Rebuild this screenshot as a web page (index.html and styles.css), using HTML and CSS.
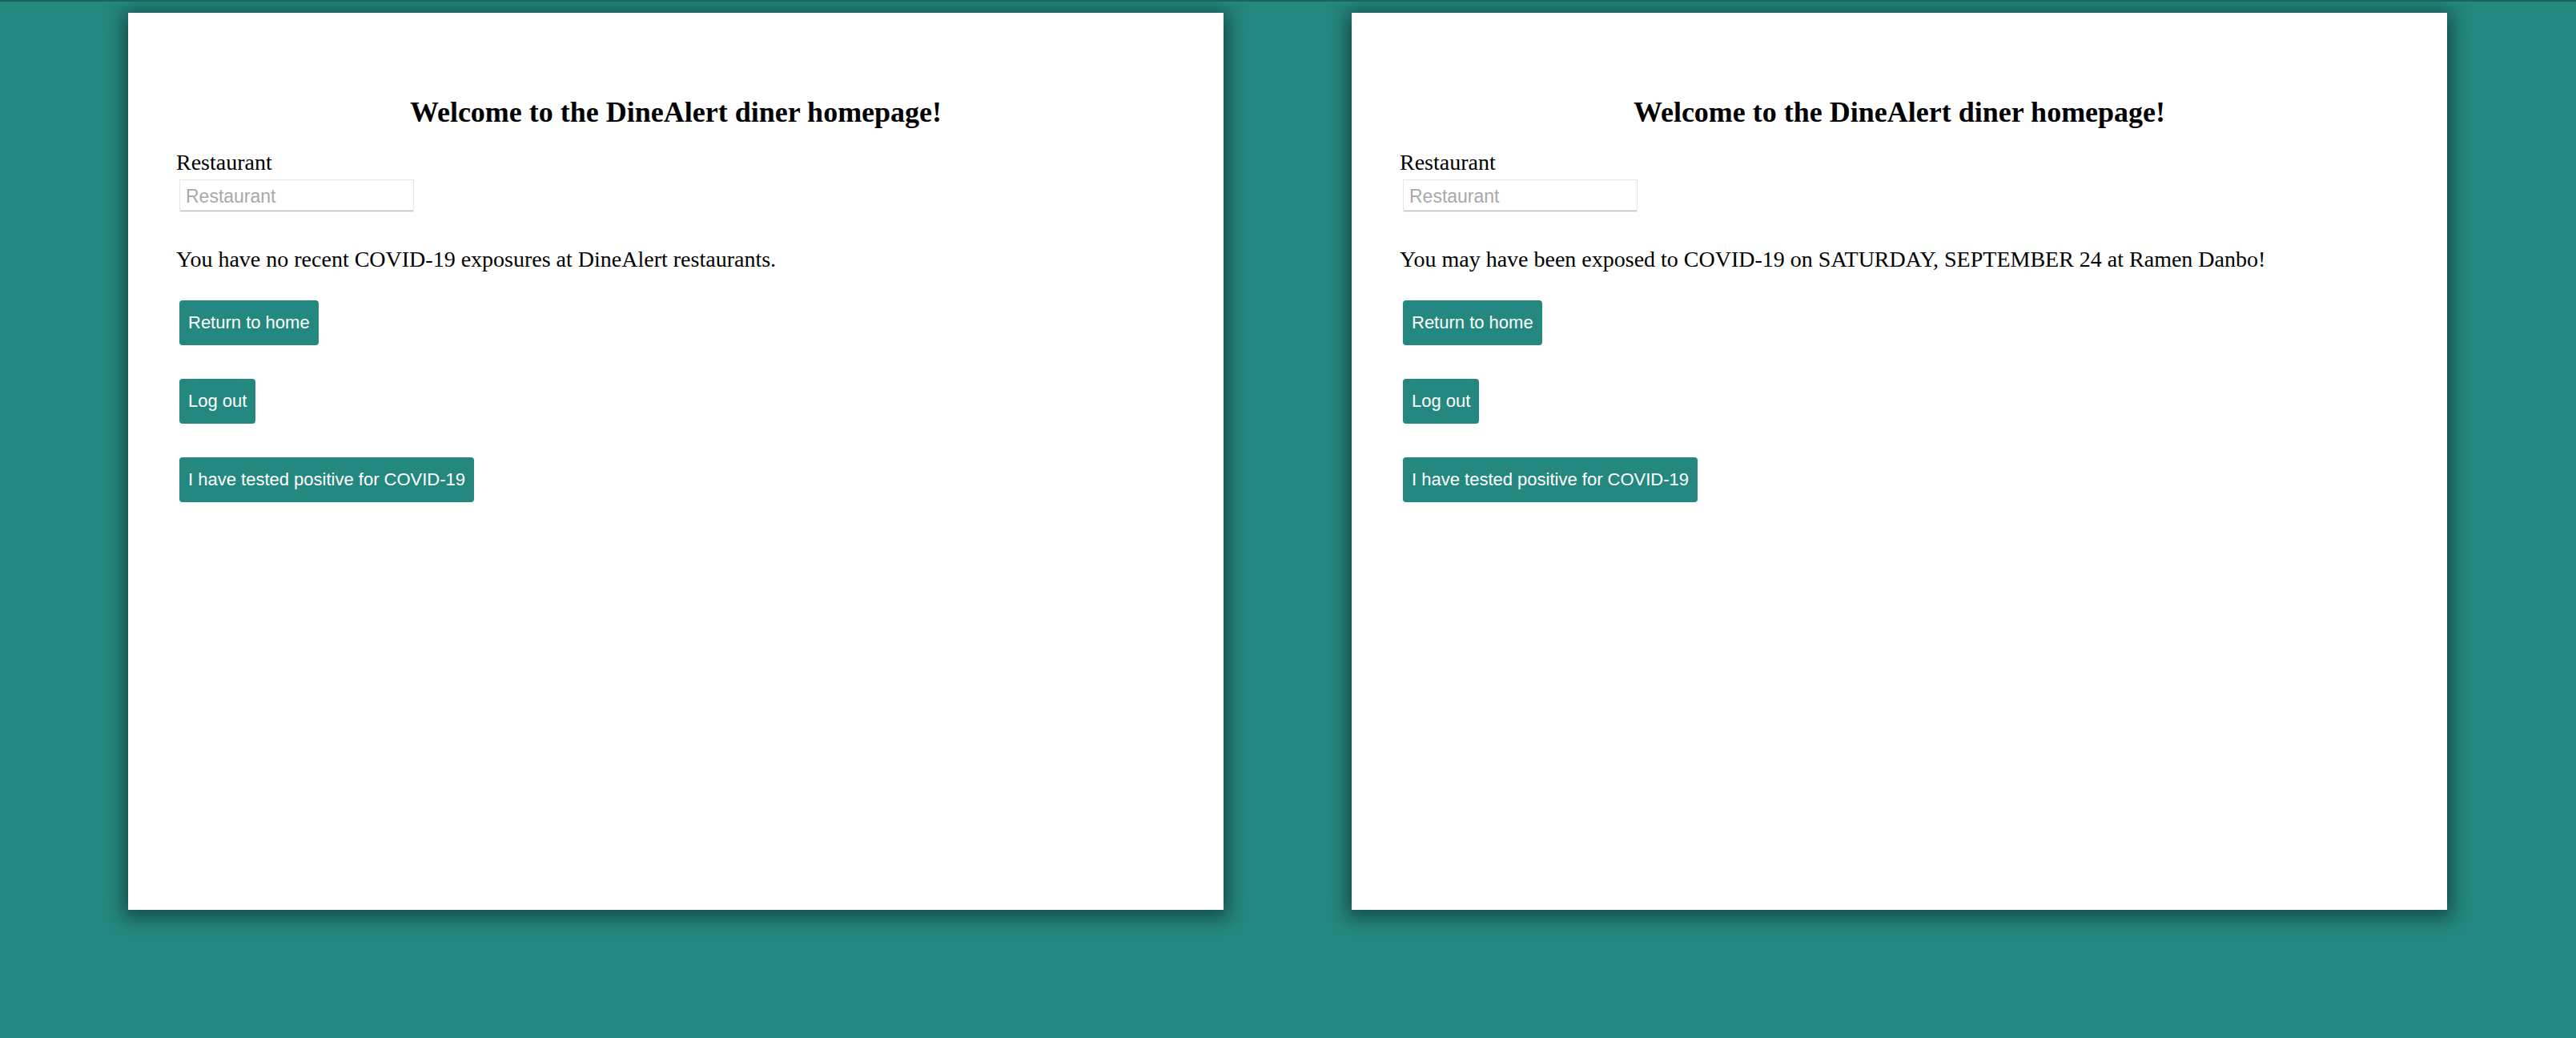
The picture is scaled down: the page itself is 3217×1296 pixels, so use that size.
FILE: index.html
```html
<!DOCTYPE html>
<html lang="en">
  <head>
    <meta charset="UTF-8" />
    <meta name="viewport" content="width=device-width, initial-scale=1.0" />
    <title>DineAlert</title>
    <link rel="stylesheet" href="styles.css">
  </head>
  <body>
    <div class="screens">
      <div class="card">
        <h2 class="title">Welcome to the DineAlert diner homepage!</h2>
        <label class="field_label">Restaurant</label>
        <input class="field" type="text" placeholder="Restaurant" />
        <p class="status">You have no recent COVID-19 exposures at DineAlert restaurants.</p>
        <div class="actions">
          <button>Return to home</button>
          <button>Log out</button>
          <button>I have tested positive for COVID-19</button>
        </div>
      </div>

      <div class="card">
        <h2 class="title">Welcome to the DineAlert diner homepage!</h2>
        <label class="field_label">Restaurant</label>
        <input class="field" type="text" placeholder="Restaurant" />
        <p class="status">You may have been exposed to COVID-19 on SATURDAY, SEPTEMBER 24 at Ramen Danbo!</p>
        <div class="actions">
          <button>Return to home</button>
          <button>Log out</button>
          <button>I have tested positive for COVID-19</button>
        </div>
      </div>
    </div>
  </body>
</html>
```

FILE: styles.css
```css
body {
  margin: 0;
  min-height: 1296px;
  background-color: #248880;
  border-top: 2px solid #16665f;
  box-sizing: border-box;
  font-family: "Liberation Serif", "Times New Roman", serif;
  color: #000;
}
.screens {
  display: flex;
  gap: 160px;
  padding: 14px 160px 0;
}
.card {
  background-color: #fff;
  width: 1368px;
  height: 1120px;
  box-sizing: border-box;
  padding: 103px 60px 0;
  box-shadow: 0 4px 22px 6px rgba(0, 0, 0, 0.45);
}
.title {
  margin: 0 0 26px;
  text-align: center;
  font-size: 36px;
  font-weight: bold;
}
.field_label {
  display: block;
  font-size: 28px;
}
.field {
  display: block;
  margin: 5px 0 0 4px;
  width: 293px;
  height: 39px;
  box-sizing: border-box;
  padding: 3px 7px 0;
  border: 1px solid #e6e6e6;
  box-shadow: 0 2px 1px -1px rgba(0, 0, 0, 0.25);
  font-family: "Liberation Sans", Arial, sans-serif;
  font-size: 23px;
  outline: none;
}
.field::placeholder {
  color: #a9a9a9;
}
.status {
  margin: 45px 0 35px;
  font-size: 28px;
}
.actions {
  display: flex;
  flex-direction: column;
  align-items: flex-start;
  gap: 42px;
  margin-left: 4px;
}
button {
  border: none;
  border-radius: 4px;
  background-color: #248880;
  color: #fff;
  font-family: "Liberation Sans", Arial, sans-serif;
  font-size: 22px;
  line-height: 26px;
  padding: 15px 11px;
}
```
